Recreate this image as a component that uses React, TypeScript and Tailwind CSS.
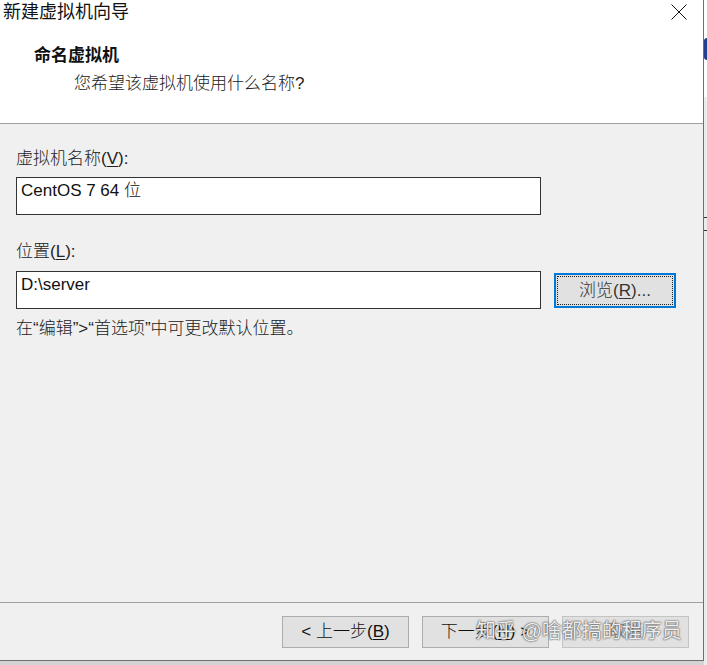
import React from "react";

const FONT = "font-['Liberation_Sans','Noto_Sans_CJK_SC',sans-serif]";

function Mnemonic({ children }: { children: React.ReactNode }) {
  return <span className="underline underline-offset-[2px]">{children}</span>;
}

function CloseIcon() {
  return (
    <svg width="16" height="16" viewBox="0 0 16 16" className="mt-[4px] mr-[16px]">
      <path d="M0.5 0.5 L15.5 15.5 M15.5 0.5 L0.5 15.5" stroke="#111" strokeWidth="1" fill="none" />
    </svg>
  );
}

function FooterButton({ children, dim }: { children: React.ReactNode; dim?: boolean }) {
  return (
    <div
      className={
        "h-[32px] w-[127px] flex items-center justify-center border bg-[#e1e1e1] text-[17px] " +
        (dim ? "border-[#c4c4c4] text-[#8a8a8a]" : "border-[#adadad] text-[#111]")
      }
    >
      <span className="whitespace-pre">{children}</span>
    </div>
  );
}

export default function App() {
  return (
    <div className={`w-[707px] h-[665px] flex bg-[#d4d4d4] overflow-hidden ${FONT}`}>
      {/* wizard window */}
      <div className="w-[704px] h-[661px] flex flex-col shrink-0 border-r border-b border-[#6f6f6f] bg-[#f0f0f0]">
        {/* header */}
        <div className="h-[124px] bg-white border-b border-[#a0a0a0] flex flex-col">
          <div className="h-[24px] flex justify-between">
            <span className="pl-[3px] text-[18px] leading-[24px] text-[#111]">新建虚拟机向导</span>
            <CloseIcon />
          </div>
          <p className="mt-[22px] pl-[34px] text-[17px] leading-[20px] font-bold text-[#111]">命名虚拟机</p>
          <p className="mt-[8px] pl-[74px] text-[17px] leading-[20px] font-light text-[#222]">
            您希望该虚拟机使用什么名称?
          </p>
        </div>

        {/* body */}
        <div className="flex-1 px-[16px] pt-[25px] flex flex-col">
          <label className="text-[17px] leading-[20px] font-light text-[#222]">
            虚拟机名称(<Mnemonic>V</Mnemonic>):
          </label>
          <div className="mt-[8px] w-[525px] h-[38px] border border-[#333] bg-white pl-[4px] pt-[2px] text-[17px] leading-[22px] text-[#111]">
            CentOS 7 64 <span className="font-light">位</span>
          </div>

          <label className="mt-[27px] text-[17px] leading-[20px] font-light text-[#222]">
            位置(<Mnemonic>L</Mnemonic>):
          </label>
          <div className="mt-[9px] flex items-start">
            <div className="w-[525px] h-[38px] border border-[#333] bg-white pl-[4px] pt-[2px] text-[17px] leading-[22px] text-[#111]">
              D:\server
            </div>
            <div className="ml-[13px] mt-[2px] w-[122px] h-[35px] border-2 border-[#0078d7] bg-[#e1e1e1] p-[1px] flex">
              <div className="flex-1 border border-dotted border-[#222] flex items-center justify-center text-[17px] text-[#333]">
                <span className="font-light">
                  浏览(<Mnemonic>R</Mnemonic>)...
                </span>
              </div>
            </div>
          </div>

          <p className="mt-[10px] text-[17px] leading-[20px] font-light text-[#222]">
            在“编辑”&gt;“首选项”中可更改默认位置。
          </p>
        </div>

        {/* footer */}
        <div className="relative h-[58px] border-t border-[#a0a0a0] pt-[13px] pr-[14px] flex justify-end gap-[13px]">
          <FooterButton>
            {"< "}
            <span className="font-light">上一步</span>(<Mnemonic>B</Mnemonic>)
          </FooterButton>
          <FooterButton>
            <span className="font-light">下一步</span>(<Mnemonic>N</Mnemonic>){" >"}
          </FooterButton>
          <FooterButton dim>取消</FooterButton>
          <span className="absolute left-[476px] top-[15px] text-[20px] leading-[26px] text-white/90 [text-shadow:0_0_2px_#444,0_0_1px_#444]">
            知乎 @啥都搞的程序员
          </span>
        </div>
      </div>

      {/* window behind, partly visible */}
      <div className="flex-1 flex flex-col">
        <div className="h-[97px] bg-white pt-[38px]">
          <div className="h-[22px] w-full rounded-l-full bg-[#1f3f8f]" />
        </div>
        <div className="flex-1 bg-[#ececec] pt-[120px]">
          <div className="h-[14px] border-y border-[#333]" />
        </div>
      </div>
    </div>
  );
}
